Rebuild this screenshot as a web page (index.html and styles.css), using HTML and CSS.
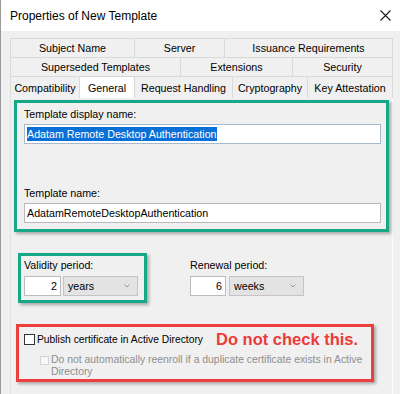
FILE: index.html
```html
<!DOCTYPE html>
<html lang="en">
<head>
    <meta charset="UTF-8">
    <meta name="viewport" content="width=device-width, initial-scale=1.0">
    <title>Properties of New Template</title>
    <link rel="stylesheet" href="styles.css">
</head>
<body>
<div class="window">
    <div class="titlebar">
        <span class="title">Properties of New Template</span>
        <svg class="close" width="11" height="11" viewBox="0 0 11 11">
            <path d="M0.5 0.5L10.5 10.5M10.5 0.5L0.5 10.5" stroke="#1a1a1a" stroke-width="1.1" fill="none"/>
        </svg>
    </div>

    <div class="tabs">
        <div class="tab-row row1">
            <div class="tab first">Subject Name</div>
            <div class="tab">Server</div>
            <div class="tab">Issuance Requirements</div>
        </div>
        <div class="tab-row row2">
            <div class="tab first">Superseded Templates</div>
            <div class="tab">Extensions</div>
            <div class="tab">Security</div>
        </div>
        <div class="tab-row row3">
            <div class="tab first">Compatibility</div>
            <div class="tab active">General</div>
            <div class="tab">Request Handling</div>
            <div class="tab">Cryptography</div>
            <div class="tab">Key Attestation</div>
        </div>
    </div>

    <div class="panel">
        <div class="mark mark-green names">
            <label class="field-label">Template display name:</label>
            <div class="textbox focused"><span class="selected">Adatam Remote Desktop Authentication</span></div>
            <label class="field-label second">Template name:</label>
            <div class="textbox">AdatamRemoteDesktopAuthentication</div>
        </div>

        <div class="periods">
            <div class="mark mark-green period">
                <label class="field-label">Validity period:</label>
                <div class="period-inputs">
                    <div class="numbox">2</div>
                    <div class="combo">
                        <span>years</span>
                        <svg width="6" height="4" viewBox="0 0 6 4"><path d="M0.5 0.5L3 3L5.5 0.5" stroke="#9a9a9a" fill="none"/></svg>
                    </div>
                </div>
            </div>
            <div class="period renewal">
                <label class="field-label">Renewal period:</label>
                <div class="period-inputs">
                    <div class="numbox">6</div>
                    <div class="combo">
                        <span>weeks</span>
                        <svg width="6" height="4" viewBox="0 0 6 4"><path d="M0.5 0.5L3 3L5.5 0.5" stroke="#9a9a9a" fill="none"/></svg>
                    </div>
                </div>
            </div>
        </div>

        <div class="mark mark-red publish">
            <div class="check-row">
                <span class="checkbox"></span>
                <span class="check-text">Publish certificate in Active Directory</span>
                <span class="warning">Do not check this.</span>
            </div>
            <div class="check-row sub">
                <span class="checkbox disabled"></span>
                <span class="check-text muted">Do not automatically reenroll if a duplicate certificate exists in Active<br>Directory</span>
            </div>
        </div>
    </div>
</div>
</body>
</html>
```

FILE: styles.css
```css
html, body {
    margin: 0;
    padding: 0;
}

body {
    width: 400px;
    height: 394px;
    overflow: hidden;
    background: #f0f0f0;
    font-family: "Liberation Sans", Arial, sans-serif;
    font-size: 10.7px;
    color: #000;
}

.window {
    height: 394px;
    box-sizing: border-box;
    border-left: 1px solid #9a9a9a;
    padding: 0 7px 0 9px;
}

.titlebar {
    height: 31px;
    margin: 0 -7px 0 -9px;
    padding: 0 10px 0 9px;
    background: #fff;
    display: flex;
    align-items: center;
    justify-content: space-between;
}

.title {
    font-size: 12px;
}

.close {
    margin-right: -1px;
}

/* tabs */
.tabs {
    margin-top: 7px;
}

.tab-row {
    display: grid;
    height: 19px;
}

.row1 { grid-template-columns: 125px 90px 1fr; }
.row2 { grid-template-columns: 171px 112px 1fr; }
.row3 {
    grid-template-columns: 70px 55px 98px 75px 1fr;
    height: 20px;
}

.tab {
    display: flex;
    align-items: center;
    justify-content: center;
    border-top: 1px solid #dadada;
    border-right: 1px solid #dadada;
    background: #f0f0f0;
    white-space: nowrap;
}

.tab.first {
    border-left: 1px solid #dadada;
}

.tab.active {
    background: #fff;
    height: 21px;
    position: relative;
    z-index: 1;
    border-color: #d4d4d4;
}

/* page */
.panel {
    border-left: 1px solid #e2e2e2;
    border-right: 1px solid #fbfbfb;
    border-top: 1px solid #dadada;
    height: 300px;
    padding: 3px 1px 0 1px;
}

.mark {
    box-sizing: border-box;
    border: 3px solid #17a888;
    box-shadow: 2px 2px 3px rgba(0, 0, 0, 0.3);
}

.mark-red {
    border-color: #ee3f3f;
}

.field-label {
    display: block;
    line-height: 14px;
}

.names {
    margin: 0 2px;
    padding: 4px 5px 6px 7px;
}

.names .second {
    margin-top: 42px;
}

.textbox {
    height: 20px;
    box-sizing: border-box;
    margin-top: 3px;
    border: 1px solid #b9b9b9;
    background: #fff;
    padding: 0 2px;
    line-height: 18px;
}

.textbox.focused {
    border-color: #a9b9cd;
}

.selected {
    background: #0a6fd6;
    color: #fff;
    padding: 1px 0;
}

.periods {
    display: flex;
    margin-top: 21px;
}

.period {
    padding: 2px 6px 4px 3px;
}

.mark.period {
    margin-left: 6px;
}

.renewal {
    margin-left: 40px;
    padding-top: 5px;
}

.period-inputs {
    display: flex;
    gap: 2px;
    margin-top: 4px;
}

.renewal .period-inputs {
    gap: 3px;
}

.numbox {
    width: 37px;
    height: 20px;
    box-sizing: border-box;
    border: 1px solid #bcbcbc;
    background: #fff;
    text-align: right;
    padding-right: 3px;
    line-height: 18px;
}

.renewal .numbox {
    width: 36px;
}

.combo {
    width: 75px;
    height: 20px;
    box-sizing: border-box;
    border: 1px solid #c4c4c4;
    background: #e3e3e3;
    display: flex;
    align-items: center;
    justify-content: space-between;
    padding: 0 7px 0 4px;
}

/* publish */
.publish {
    width: 358px;
    margin: 21px 0 0 4px;
    padding: 2px 3px 1px 5px;
}

.check-row {
    display: flex;
    align-items: center;
    height: 20px;
}

.checkbox {
    width: 11px;
    height: 11px;
    box-sizing: border-box;
    border: 1px solid #333;
    background: #fff;
    flex-shrink: 0;
}

.check-text {
    margin-left: 2px;
    font-size: 10.3px;
    white-space: nowrap;
}

.warning {
    margin-left: 13px;
    color: #ec3b3b;
    font-weight: bold;
    font-size: 16.5px;
    white-space: nowrap;
}

.check-row.sub {
    height: auto;
    align-items: flex-start;
    margin-top: 5px;
    padding-left: 16px;
}

.checkbox.disabled {
    width: 9px;
    height: 9px;
    margin-top: 2px;
    border-color: #d4d4d4;
    background: #f7f7f7;
}

.muted {
    color: #8e8e8e;
    line-height: 12px;
    font-size: 10.4px;
}
```
